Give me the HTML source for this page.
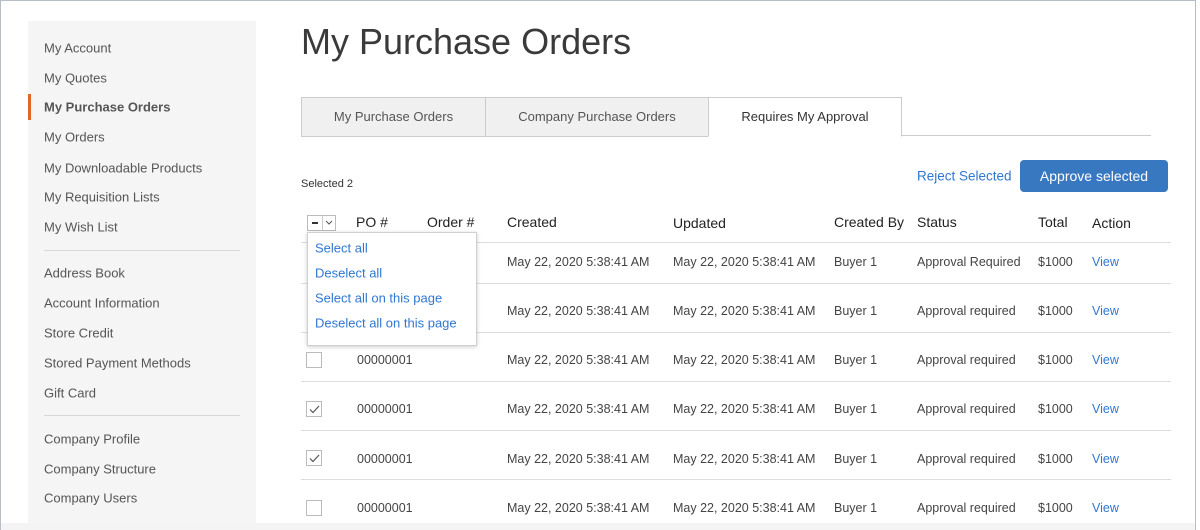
<!DOCTYPE html>
<html><head><style>
*{margin:0;padding:0;box-sizing:border-box}
body{width:1200px;height:530px;overflow:hidden;background:#fff;font-family:"Liberation Sans",sans-serif;color:#333;position:relative}
.frame{position:absolute;left:0;top:0;width:1196px;height:530px;border-top:1px solid #b8bec6;border-left:1px solid #b8bec6;border-right:1px solid #b8bec6}
.bot{position:absolute;left:1px;top:523px;width:1194px;height:7px;background:#f4f4f4}
.side{position:absolute;left:28px;top:21px;width:228px;height:502px;background:#f5f5f5}
.side div.i{position:absolute;left:16px;font-size:13px;color:#555;transform:translateY(-50%)}
.side .act{color:#222;font-weight:bold}
.side .bar{position:absolute;left:0;width:3px;height:26px;background:#e0672b}
.side .sep{position:absolute;left:16px;width:196px;height:1px;background:#d8d8d8}
.abs{position:absolute;transform:translateY(-50%);white-space:nowrap}
h1{position:absolute;left:301px;top:21px;font-size:36px;font-weight:normal;color:#3a3a3a}
.tab{position:absolute;top:97px;height:40px;border:1px solid #ccc;background:#f0f0f0;font-size:13px;color:#555;text-align:center;line-height:38px}
.line{position:absolute;height:1px;background:#ddd;left:301px;width:870px}
.th{font-size:14px;color:#222}
.td{font-size:12.5px;color:#444}
.a{color:#2f77d1}
.cb{position:absolute;width:16px;height:16px;border:1px solid #bbb;background:#fff;transform:translateY(-50%)}
.cb svg{position:absolute;left:1px;top:1px}
</style></head><body>
<div class="frame"></div>
<div class="bot"></div>
<div class="side">
<div class="i" style="top:27px">My Account</div>
<div class="i" style="top:57px">My Quotes</div>
<div class="bar" style="top:73px"></div>
<div class="i act" style="top:86px">My Purchase Orders</div>
<div class="i" style="top:116px">My Orders</div>
<div class="i" style="top:147px">My Downloadable Products</div>
<div class="i" style="top:176px">My Requisition Lists</div>
<div class="i" style="top:206px">My Wish List</div>
<div class="sep" style="top:229px"></div>
<div class="i" style="top:252px">Address Book</div>
<div class="i" style="top:282px">Account Information</div>
<div class="i" style="top:312px">Store Credit</div>
<div class="i" style="top:342px">Stored Payment Methods</div>
<div class="i" style="top:372px">Gift Card</div>
<div class="sep" style="top:394px"></div>
<div class="i" style="top:418px">Company Profile</div>
<div class="i" style="top:448px">Company Structure</div>
<div class="i" style="top:477px">Company Users</div>
</div>
<h1>My Purchase Orders</h1>
<div class="line" style="top:135px;left:301px;width:850px;background:#ccc"></div>
<div class="tab" style="left:301px;width:185px">My Purchase Orders</div>
<div class="tab" style="left:485px;width:224px">Company Purchase Orders</div>
<div class="tab" style="left:708px;width:194px;background:#fff;border-bottom-color:#fff;color:#333">Requires My Approval</div>
<div class="abs" style="left:301px;top:184px;font-size:11px;color:#333">Selected 2</div>
<div class="abs a" style="left:917px;top:176px;font-size:13.5px">Reject Selected</div>
<div style="position:absolute;left:1020px;top:160px;width:148px;height:32px;background:#3878c1;border-radius:4px;color:#fff;font-size:14px;text-align:center;line-height:32px">Approve selected</div>
<div style="position:absolute;left:307px;top:215px;width:29px;height:16px;border:1px solid #bbb;background:#fff"><div style="position:absolute;left:4px;top:6px;width:6px;height:2px;background:#333"></div><div style="position:absolute;left:14px;top:0;width:1px;height:14px;background:#ccc"></div><svg style="position:absolute;left:17px;top:4px" width="8" height="6"><path d="M1 1 L4 4 L7 1" stroke="#555" fill="none"/></svg></div>
<div class="abs th" style="left:356px;top:222px">PO #</div>
<div class="abs th" style="left:427px;top:222px">Order #</div>
<div class="abs th" style="left:507px;top:222px">Created</div>
<div class="abs th" style="left:673px;top:223px">Updated</div>
<div class="abs th" style="left:834px;top:222px">Created By</div>
<div class="abs th" style="left:917px;top:222px">Status</div>
<div class="abs th" style="left:1038px;top:222px">Total</div>
<div class="abs th" style="left:1092px;top:223px">Action</div>
<div class="line" style="top:242px"></div>
<div class="line" style="top:283px"></div>
<div class="line" style="top:332px"></div>
<div class="line" style="top:381px"></div>
<div class="line" style="top:430px"></div>
<div class="line" style="top:479px"></div>

<div class="abs td" style="left:507px;top:262px">May 22, 2020 5:38:41 AM</div><div class="abs td" style="left:673px;top:262px">May 22, 2020 5:38:41 AM</div><div class="abs td" style="left:834px;top:262px">Buyer 1</div><div class="abs td" style="left:917px;top:262px">Approval Required</div><div class="abs td" style="left:1038px;top:262px">$1000</div><div class="abs td a" style="left:1092px;top:262px">View</div>
<div class="abs td" style="left:507px;top:311px">May 22, 2020 5:38:41 AM</div><div class="abs td" style="left:673px;top:311px">May 22, 2020 5:38:41 AM</div><div class="abs td" style="left:834px;top:311px">Buyer 1</div><div class="abs td" style="left:917px;top:311px">Approval required</div><div class="abs td" style="left:1038px;top:311px">$1000</div><div class="abs td a" style="left:1092px;top:311px">View</div>

<div class="cb" style="left:306px;top:360px"></div>
<div class="abs td" style="left:357px;top:360px">00000001</div><div class="abs td" style="left:507px;top:360px">May 22, 2020 5:38:41 AM</div><div class="abs td" style="left:673px;top:360px">May 22, 2020 5:38:41 AM</div><div class="abs td" style="left:834px;top:360px">Buyer 1</div><div class="abs td" style="left:917px;top:360px">Approval required</div><div class="abs td" style="left:1038px;top:360px">$1000</div><div class="abs td a" style="left:1092px;top:360px">View</div>

<div class="cb" style="left:306px;top:409px"><svg width="13" height="13"><path d="M2 6.5 L5 9.5 L11 3" stroke="#555" fill="none" stroke-width="1.2"/></svg></div>
<div class="abs td" style="left:357px;top:409px">00000001</div><div class="abs td" style="left:507px;top:409px">May 22, 2020 5:38:41 AM</div><div class="abs td" style="left:673px;top:409px">May 22, 2020 5:38:41 AM</div><div class="abs td" style="left:834px;top:409px">Buyer 1</div><div class="abs td" style="left:917px;top:409px">Approval required</div><div class="abs td" style="left:1038px;top:409px">$1000</div><div class="abs td a" style="left:1092px;top:409px">View</div>

<div class="cb" style="left:306px;top:458px"><svg width="13" height="13"><path d="M2 6.5 L5 9.5 L11 3" stroke="#555" fill="none" stroke-width="1.2"/></svg></div>
<div class="abs td" style="left:357px;top:459px">00000001</div><div class="abs td" style="left:507px;top:459px">May 22, 2020 5:38:41 AM</div><div class="abs td" style="left:673px;top:459px">May 22, 2020 5:38:41 AM</div><div class="abs td" style="left:834px;top:459px">Buyer 1</div><div class="abs td" style="left:917px;top:459px">Approval required</div><div class="abs td" style="left:1038px;top:459px">$1000</div><div class="abs td a" style="left:1092px;top:459px">View</div>

<div class="cb" style="left:306px;top:508px"></div>
<div class="abs td" style="left:357px;top:508px">00000001</div><div class="abs td" style="left:507px;top:508px">May 22, 2020 5:38:41 AM</div><div class="abs td" style="left:673px;top:508px">May 22, 2020 5:38:41 AM</div><div class="abs td" style="left:834px;top:508px">Buyer 1</div><div class="abs td" style="left:917px;top:508px">Approval required</div><div class="abs td" style="left:1038px;top:508px">$1000</div><div class="abs td a" style="left:1092px;top:508px">View</div>

<div style="position:absolute;left:307px;top:232px;width:170px;height:114px;background:#fff;border:1px solid #d0d0d0;box-shadow:0 1px 4px rgba(0,0,0,.2)">
<div class="abs a" style="left:7px;top:15px;font-size:13px">Select all</div>
<div class="abs a" style="left:7px;top:40px;font-size:13px">Deselect all</div>
<div class="abs a" style="left:7px;top:65px;font-size:13px">Select all on this page</div>
<div class="abs a" style="left:7px;top:90px;font-size:13px">Deselect all on this page</div>
</div>
</body></html>
